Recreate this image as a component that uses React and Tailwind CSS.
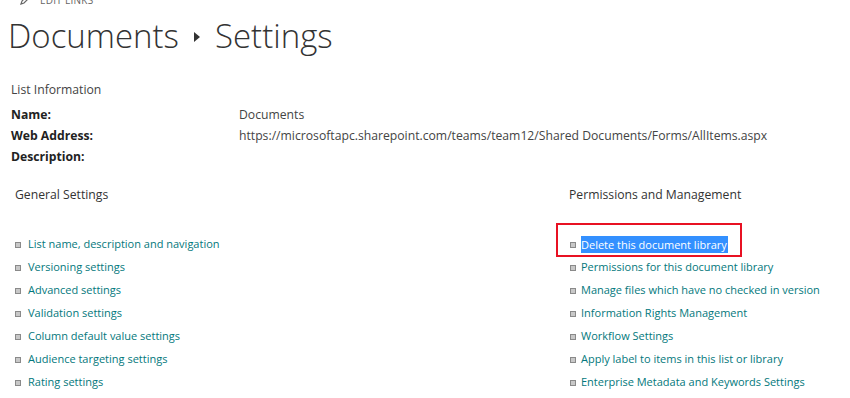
import React from 'react'

const generalSettings = [
  'List name, description and navigation',
  'Versioning settings',
  'Advanced settings',
  'Validation settings',
  'Column default value settings',
  'Audience targeting settings',
  'Rating settings'
]

const permissionSettings = [
  'Delete this document library',
  'Permissions for this document library',
  'Manage files which have no checked in version',
  'Information Rights Management',
  'Workflow Settings',
  'Apply label to items in this list or library',
  'Enterprise Metadata and Keywords Settings'
]

const Bullet = () => (
  <span className="inline-block w-[6px] h-[6px] bg-[#c8c8c8] border border-[#8a8a8a] shrink-0" />
)

const SettingsList = ({ items, highlightFirst, gap }) => (
  <ul className="flex flex-col text-[11px]">
    {items.map((item, i) => (
      <li key={item} className={`flex items-center h-[23px] ${gap}`}>
        <Bullet />
        {highlightFirst && i === 0 ? (
          <span className="relative">
            <span className="bg-[#3390ff] text-white leading-[17px] inline-block pr-[1px]">{item}</span>
            {/* red callout box */}
            <span className="absolute left-[-25px] top-[-13px] w-[186px] h-[34px] border-2 border-[#e81123]" />
          </span>
        ) : (
          <a className="text-[#03787c] whitespace-nowrap">{item}</a>
        )}
      </li>
    ))}
  </ul>
)

export default function App() {
  return (
    <div
      className="w-[850px] h-[398px] overflow-hidden bg-white text-[12.2px] text-[#333]"
      style={{ fontFamily: '"Open Sans", "Noto Sans", sans-serif' }}
    >
      {/* Edit links, cut off at the top */}
      <div className="flex items-center gap-[10px] pl-[20px] h-[12px] -mt-[6px] text-[10px] tracking-wide text-[#666]">
        <svg width="10" height="10" viewBox="0 0 10 10" fill="none" stroke="#666" strokeWidth="1.2">
          <path d="M1 9 L2 6 L7 1 L9 3 L4 8 Z" />
        </svg>
        <span>EDIT LINKS</span>
      </div>

      {/* Title */}
      <h1 className="flex items-center pl-[8px] mt-[6px] h-[46px] font-light text-[33px] text-[#333] leading-none">
        <span>Documents</span>
        <span className="mx-[15px] mt-[4px] w-0 h-0 border-y-[5px] border-y-transparent border-l-[6px] border-l-[#333]" />
        <span>Settings</span>
      </h1>

      {/* List information */}
      <div className="pl-[11px] mt-[22px]">
        <div className="h-[20px] leading-[20px] text-[#444]">List Information</div>
        <div className="mt-[4px] grid grid-cols-[228px_1fr]">
          <div className="h-[21px] leading-[21px] font-bold text-[#222]">Name:</div>
          <div className="h-[21px] leading-[21px] text-[#444]">Documents</div>
          <div className="h-[21px] leading-[21px] font-bold text-[#222]">Web Address:</div>
          <div className="h-[21px] leading-[21px] text-[#444] whitespace-nowrap">
            https://microsoftapc.sharepoint.com/teams/team12/Shared Documents/Forms/AllItems.aspx
          </div>
          <div className="h-[21px] leading-[21px] font-bold text-[#222]">Description:</div>
          <div className="h-[21px]" />
        </div>
      </div>

      {/* Settings columns */}
      <div className="grid grid-cols-[554px_1fr] pl-[15px] mt-[18px]">
        <div>
          <div className="h-[20px] leading-[20px] text-[#333]">General Settings</div>
          <div className="mt-[28px]">
            <SettingsList items={generalSettings} gap="gap-[7px]" />
          </div>
        </div>
        <div>
          <div className="h-[20px] leading-[20px] text-[#333]">Permissions and Management</div>
          <div className="mt-[28px] pl-[1px]">
            <SettingsList items={permissionSettings} highlightFirst gap="gap-[5px]" />
          </div>
        </div>
      </div>
    </div>
  )
}
